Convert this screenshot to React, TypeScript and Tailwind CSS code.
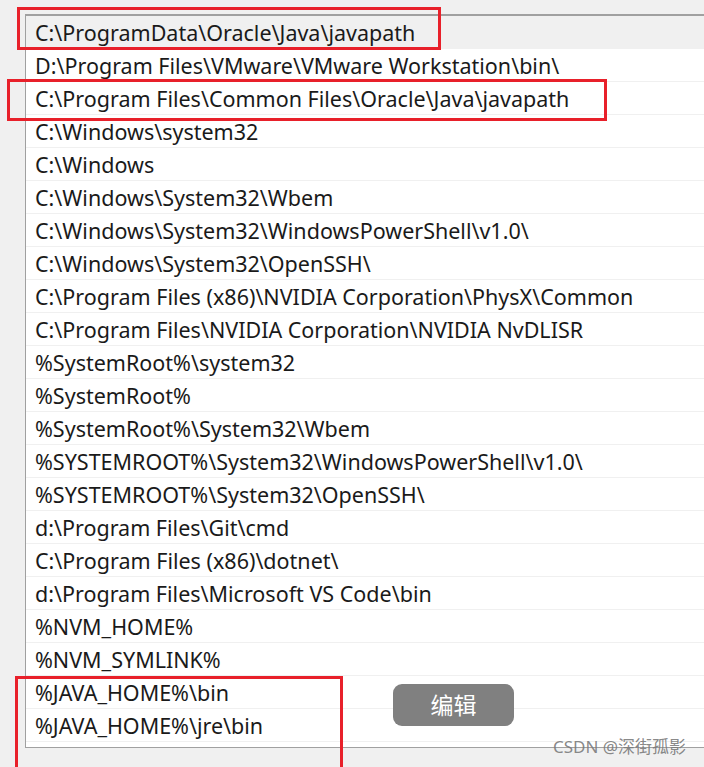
const paths = [
  'C:\\ProgramData\\Oracle\\Java\\javapath',
  'D:\\Program Files\\VMware\\VMware Workstation\\bin\\',
  'C:\\Program Files\\Common Files\\Oracle\\Java\\javapath',
  'C:\\Windows\\system32',
  'C:\\Windows',
  'C:\\Windows\\System32\\Wbem',
  'C:\\Windows\\System32\\WindowsPowerShell\\v1.0\\',
  'C:\\Windows\\System32\\OpenSSH\\',
  'C:\\Program Files (x86)\\NVIDIA Corporation\\PhysX\\Common',
  'C:\\Program Files\\NVIDIA Corporation\\NVIDIA NvDLISR',
  '%SystemRoot%\\system32',
  '%SystemRoot%',
  '%SystemRoot%\\System32\\Wbem',
  '%SYSTEMROOT%\\System32\\WindowsPowerShell\\v1.0\\',
  '%SYSTEMROOT%\\System32\\OpenSSH\\',
  'd:\\Program Files\\Git\\cmd',
  'C:\\Program Files (x86)\\dotnet\\',
  'd:\\Program Files\\Microsoft VS Code\\bin',
  '%NVM_HOME%',
  '%NVM_SYMLINK%',
  '%JAVA_HOME%\\bin',
  '%JAVA_HOME%\\jre\\bin',
];

export default function App() {
  return (
    <div
      className="relative h-[767px] w-[704px] overflow-hidden bg-[#f0f0f0] text-[#1a1a1a]"
      style={{ fontFamily: '"Noto Sans", "Noto Sans CJK SC", sans-serif' }}
    >
      {/* list box */}
      <div className="ml-[25px] mt-[14px] h-[734px] border-t-2 border-l border-b border-[#a0a0a0] bg-white">
        {paths.map((p, i) => (
          <div
            key={i}
            className={`flex h-[33px] items-center border-b border-[#f0f0f0] pt-[3px] pl-[9px] text-[21.5px] whitespace-nowrap ${
              i === 0 ? 'bg-[#f0f0f0]' : ''
            }`}
          >
            {p}
          </div>
        ))}
      </div>

      {/* highlight boxes */}
      <div className="absolute left-[17px] top-[7px] h-[43px] w-[424px] border-[3px] border-[#e8202a]" />
      <div className="absolute left-[7px] top-[79px] h-[42px] w-[600px] border-[3px] border-[#e8202a]" />
      <div className="absolute left-[15px] top-[676px] h-[100px] w-[328px] border-[3px] border-[#e8202a]" />

      {/* toast */}
      <div className="absolute left-[393px] top-[684px] flex h-[42px] w-[121px] items-center justify-center rounded-[9px] bg-[#808080] text-[23px] text-white">
        编辑
      </div>

      {/* watermark */}
      <div className="absolute left-[553px] top-[734px] text-[17px] text-[#7a7a7a]/90">
        CSDN @深街孤影
      </div>
    </div>
  );
}
